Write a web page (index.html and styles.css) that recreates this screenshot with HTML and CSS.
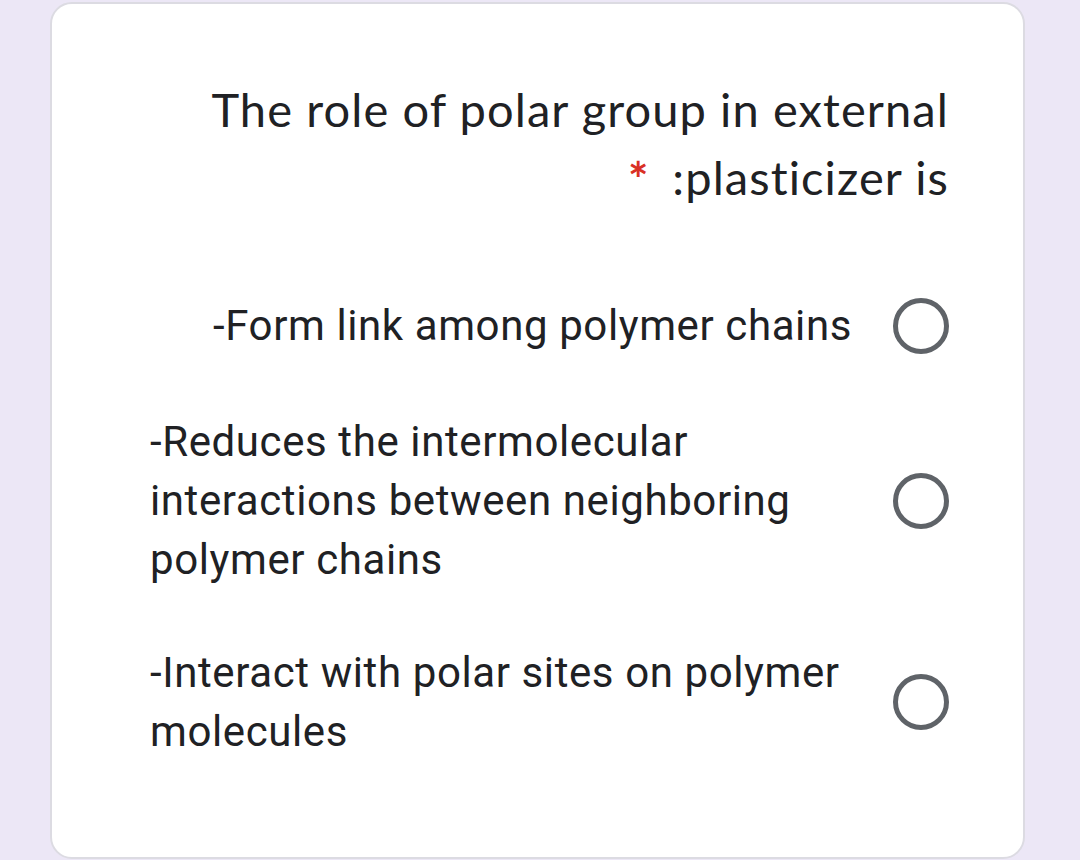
FILE: index.html
```html
<!DOCTYPE html>
<html lang="en">
<head>
<meta charset="utf-8">
<title>Question</title>
<link rel="stylesheet" href="styles.css">
</head>
<body>
<div class="card">
  <div class="title" dir="rtl">The role of polar group in external plasticizer is:<span class="req">*</span></div>
  <div class="options">
    <label class="option">
      <span class="text">-Form link among polymer chains</span>
      <span class="radio"></span>
    </label>
    <label class="option">
      <span class="text">-Reduces the intermolecular interactions between neighboring polymer chains</span>
      <span class="radio"></span>
    </label>
    <label class="option">
      <span class="text">-Interact with polar sites on polymer molecules</span>
      <span class="radio"></span>
    </label>
  </div>
</div>
</body>
</html>
```

FILE: styles.css
```css
html, body {
  margin: 0;
  padding: 0;
}
body {
  background: #ece7f6;
  width: 1080px;
  height: 860px;
  overflow: hidden;
}
.card {
  box-sizing: border-box;
  margin: 2px 0 0 50px;
  width: 975px;
  height: 857px;
  background: #ffffff;
  border: 2px solid #dcdbe2;
  border-radius: 22px;
  padding: 71px 74px 0 98px;
  color: #202124;
}
.title {
  font-family: Lato, "Open Sans", sans-serif;
  font-size: 47px;
  letter-spacing: 1.1px;
  line-height: 68px;
  padding-left: 40px;
}
.req {
  color: #d93025;
  font-size: 48px;
  font-weight: 700;
  line-height: 40px;
  vertical-align: -2px;
  margin-right: 24px;
  letter-spacing: 0;
}
.options {
  display: flex;
  flex-direction: column;
  gap: 54px;
  margin-top: 85px;
}
.option {
  display: flex;
  justify-content: flex-end;
  align-items: center;
  gap: 41px;
}
.option:first-child {
  margin-bottom: 3px;
}
.text {
  font-family: Roboto, "Liberation Sans", sans-serif;
  font-size: 42px;
  letter-spacing: 0.6px;
  line-height: 59px;
  flex: 0 1 auto;
  text-align: left;
}
.radio {
  flex: 0 0 auto;
  box-sizing: border-box;
  width: 56px;
  height: 56px;
  border: 5px solid #5f6368;
  border-radius: 50%;
}
```
